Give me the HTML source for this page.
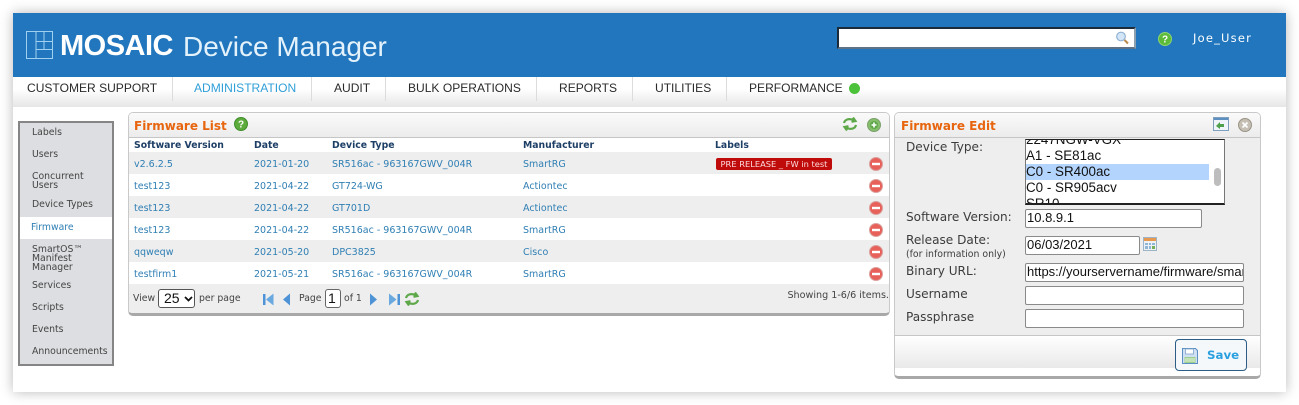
<!DOCTYPE html>
<html lang="en">
<head>
<meta charset="utf-8">
<title>MOSAIC Device Manager</title>
<style>
html,body{margin:0;padding:0;width:1299px;height:405px;overflow:hidden;background:#fff}
body{position:relative;font-family:"DejaVu Sans",Verdana,sans-serif;font-size:9.3px;color:#444}
.a{position:absolute;white-space:nowrap}
#app{position:absolute;left:13px;top:13px;width:1273px;height:379px;background:#fff;box-shadow:0 0 12px rgba(0,0,0,.28)}
#hdr{position:absolute;left:13px;top:13px;width:1273px;height:64px;background:#2176bd}
#nav{position:absolute;left:13px;top:77px;width:1273px;height:30px;background:linear-gradient(#fff 0,#fff 40%,#e6e6e6 100%)}
.nv{position:absolute;top:82px;font:12.05px/13px "Liberation Sans",Arial,sans-serif;color:#2a2a2a;white-space:nowrap}
.sep{position:absolute;top:77px;width:1px;height:24px;background:#dcdcdc}
#side{position:absolute;left:18px;top:121px;width:92px;height:241px;border:2px solid #858585;background:#dddee1}
.si{position:absolute;left:32px;margin-top:1px;color:#444;line-height:9px;white-space:nowrap}
.panel{position:absolute;background:#fff;border:1px solid #c9c9c9;border-bottom:3px solid #a8a8a8;border-radius:5px;box-sizing:border-box;overflow:hidden}
.ttl{position:absolute;margin-top:1px;font-weight:bold;font-size:12px;line-height:14px;color:#e8650f;white-space:nowrap}
.th{position:absolute;top:140px;font-weight:bold;color:#1d3f66;line-height:11px;white-space:nowrap}
.row{position:absolute;left:129px;width:760px;height:22px}
.g{background:#eeeeee}
.td{position:absolute;margin-top:1px;font-size:9.5px;color:#2f7fb4;line-height:11px;white-space:nowrap}
.lab{position:absolute;margin-top:1px;color:#3c3c3c;font-size:12.1px;line-height:13px;white-space:nowrap}
.inp{position:absolute;box-sizing:border-box;background:#fff;border:1px solid #8a8a8a;border-radius:2px;font:13px/16px "Liberation Sans",Arial,sans-serif;color:#111;padding-left:1px;overflow:hidden;white-space:nowrap}
.op{position:absolute;left:0;font:13.4px/16px "Liberation Sans",Arial,sans-serif;color:#111;white-space:nowrap}
svg{position:absolute;overflow:visible}
</style>
</head>
<body>
<div id="app"></div>
<div id="hdr"></div>

<!-- logo -->
<svg style="left:26px;top:31px" width="28" height="29" viewBox="0 0 28 29" fill="none" stroke="#9fd0f0" stroke-width="1">
<path d="M.5.5h26v27H.5zM10 .5v27M18 .5v18M10 10.500h16.500M10 18.500h16.500"/>
</svg>
<div class="a" style="left:60px;top:30px;font:bold 29px/33px 'Liberation Sans',Arial,sans-serif;color:#fff;letter-spacing:-.5px">MOSAIC</div>
<div class="a" style="left:183px;top:30px;font:28px/33px 'Liberation Sans',Arial,sans-serif;color:#e4f2fb">Device Manager</div>

<!-- search -->
<div class="a" style="left:837px;top:27px;width:299px;height:22px;box-sizing:border-box;background:#fff;border:2px solid #1c2b3a;border-bottom-color:#5f7285;border-right-color:#8da0b0;border-left-color:#1c2b3a"></div>
<svg style="left:1115px;top:31px" width="15" height="14" viewBox="0 0 15 14">
<circle cx="6" cy="5.500" r="4.300" fill="#d3e6f7" stroke="#8fb2d3" stroke-width="1.200"/>
<path d="M9.500 9l3.500 3.500" stroke="#b98a4d" stroke-width="2"/>
</svg>
<svg style="left:1158px;top:32px" width="14" height="14" viewBox="0 0 14 14">
<circle cx="7" cy="7" r="6.500" fill="#5dbb3a" stroke="#8fd66f"/>
<text x="7" y="10.500" text-anchor="middle" font-family="Liberation Sans" font-weight="bold" font-size="10" fill="#fff">?</text>
</svg>
<div class="a" style="left:1193px;top:32px;font-size:11.500px;line-height:13px;color:#fff;letter-spacing:1.2px">Joe_User</div>

<!-- nav -->
<div id="nav"></div>
<div class="nv" style="left:27px">CUSTOMER SUPPORT</div>
<div class="sep" style="left:172px"></div>
<div class="nv" style="left:194px;color:#2f9fd8">ADMINISTRATION</div>
<div class="sep" style="left:311px"></div>
<div class="nv" style="left:334px">AUDIT</div>
<div class="sep" style="left:385px"></div>
<div class="nv" style="left:408px">BULK OPERATIONS</div>
<div class="sep" style="left:536px"></div>
<div class="nv" style="left:559px">REPORTS</div>
<div class="sep" style="left:632px"></div>
<div class="nv" style="left:655px">UTILITIES</div>
<div class="sep" style="left:726px"></div>
<div class="nv" style="left:749px">PERFORMANCE</div>
<div class="a" style="left:849px;top:83px;width:11px;height:11px;border-radius:50%;background:#4cc23a"></div>

<!-- sidebar -->
<div id="side"></div>
<div class="a" style="left:20px;top:217px;width:92px;height:22px;background:#fff"></div>
<div class="si" style="top:127px">Labels</div>
<div class="si" style="top:149px">Users</div>
<div class="si" style="top:171px">Concurrent</div>
<div class="si" style="top:180px">Users</div>
<div class="si" style="top:199px">Device Types</div>
<div class="si" style="top:222px;left:31px;color:#2f7fb4">Firmware</div>
<div class="si" style="top:244px">SmartOS™</div>
<div class="si" style="top:253px">Manifest</div>
<div class="si" style="top:262px">Manager</div>
<div class="si" style="top:280px">Services</div>
<div class="si" style="top:302px">Scripts</div>
<div class="si" style="top:324px">Events</div>
<div class="si" style="top:346px">Announcements</div>

<!-- Firmware list panel -->
<div class="panel" style="left:128px;top:112px;width:762px;height:204px">
  <div style="position:absolute;left:0;top:0;width:100%;height:24px;background:linear-gradient(#fafafa,#ececec);border-bottom:1px solid #c6c6c6"></div>
  <div style="position:absolute;left:0;top:39px;width:100%;height:1px;background:#cfcfcf"></div>
  <div style="position:absolute;left:0;top:171px;width:100%;height:30px;background:#eeeeee"></div>
</div>
<div class="ttl" style="left:134px;top:118px">Firmware List</div>
<svg style="left:234px;top:117px" width="14" height="14" viewBox="0 0 14 14">
<circle cx="7" cy="7" r="6.500" fill="#5dab3c" stroke="#3f8d2a"/>
<text x="7" y="10.500" text-anchor="middle" font-family="Liberation Sans" font-weight="bold" font-size="10" fill="#fff">?</text>
</svg>
<svg style="left:842px;top:117px" width="16" height="14" viewBox="0 0 16 14" fill="none" stroke="#5fa84a" stroke-width="2.200">
<path d="M2 6C3 2 8 1 12 3.500M11 .5l2.500 3.500-4 .8M14 8c-1 4-6 5-10 2.500M5 13.500L2.500 10l4-.8"/>
</svg>
<svg style="left:867px;top:118px" width="14" height="14" viewBox="0 0 14 14">
<circle cx="7" cy="7" r="6.500" fill="#86bf6c" stroke="#7a9f6a"/>
<circle cx="7" cy="7" r="4" fill="#5fa84a"/>
<path d="M4.500 7h5M7 4.500v5" stroke="#fff" stroke-width="1.600"/>
</svg>

<div class="th" style="left:134px">Software Version</div>
<div class="th" style="left:254px">Date</div>
<div class="th" style="left:332px">Device Type</div>
<div class="th" style="left:523px">Manufacturer</div>
<div class="th" style="left:715px">Labels</div>

<div class="row g" style="top:152px"></div>
<div class="row g" style="top:196px"></div>
<div class="row g" style="top:240px"></div>

<div class="td" style="left:134px;top:158px">v2.6.2.5</div><div class="td" style="left:254px;top:158px">2021-01-20</div><div class="td" style="left:332px;top:158px">SR516ac - 963167GWV_004R</div><div class="td" style="left:523px;top:158px">SmartRG</div>
<div class="td" style="left:134px;top:180px">test123</div><div class="td" style="left:254px;top:180px">2021-04-22</div><div class="td" style="left:332px;top:180px">GT724-WG</div><div class="td" style="left:523px;top:180px">Actiontec</div>
<div class="td" style="left:134px;top:202px">test123</div><div class="td" style="left:254px;top:202px">2021-04-22</div><div class="td" style="left:332px;top:202px">GT701D</div><div class="td" style="left:523px;top:202px">Actiontec</div>
<div class="td" style="left:134px;top:224px">test123</div><div class="td" style="left:254px;top:224px">2021-04-22</div><div class="td" style="left:332px;top:224px">SR516ac - 963167GWV_004R</div><div class="td" style="left:523px;top:224px">SmartRG</div>
<div class="td" style="left:134px;top:246px">qqweqw</div><div class="td" style="left:254px;top:246px">2021-05-20</div><div class="td" style="left:332px;top:246px">DPC3825</div><div class="td" style="left:523px;top:246px">Cisco</div>
<div class="td" style="left:134px;top:268px">testfirm1</div><div class="td" style="left:254px;top:268px">2021-05-21</div><div class="td" style="left:332px;top:268px">SR516ac - 963167GWV_004R</div><div class="td" style="left:523px;top:268px">SmartRG</div>

<div class="a" style="left:716px;top:158px;width:116px;height:12px;background:#c00b0b;border-radius:2px;color:#fbdcdc;line-height:12px;text-align:center;font-size:8.300px">PRE RELEASE _ FW in test</div>

<svg style="left:869px;top:157px" width="14" height="14" viewBox="0 0 14 14"><circle cx="7" cy="7" r="6.500" fill="#e8605a" stroke="#d9a09c"/><rect x="3" y="5.800" width="8" height="2.400" fill="#fff"/></svg>
<svg style="left:869px;top:179px" width="14" height="14" viewBox="0 0 14 14"><circle cx="7" cy="7" r="6.500" fill="#e8605a" stroke="#d9a09c"/><rect x="3" y="5.800" width="8" height="2.400" fill="#fff"/></svg>
<svg style="left:869px;top:201px" width="14" height="14" viewBox="0 0 14 14"><circle cx="7" cy="7" r="6.500" fill="#e8605a" stroke="#d9a09c"/><rect x="3" y="5.800" width="8" height="2.400" fill="#fff"/></svg>
<svg style="left:869px;top:223px" width="14" height="14" viewBox="0 0 14 14"><circle cx="7" cy="7" r="6.500" fill="#e8605a" stroke="#d9a09c"/><rect x="3" y="5.800" width="8" height="2.400" fill="#fff"/></svg>
<svg style="left:869px;top:245px" width="14" height="14" viewBox="0 0 14 14"><circle cx="7" cy="7" r="6.500" fill="#e8605a" stroke="#d9a09c"/><rect x="3" y="5.800" width="8" height="2.400" fill="#fff"/></svg>
<svg style="left:869px;top:267px" width="14" height="14" viewBox="0 0 14 14"><circle cx="7" cy="7" r="6.500" fill="#e8605a" stroke="#d9a09c"/><rect x="3" y="5.800" width="8" height="2.400" fill="#fff"/></svg>

<!-- pager -->
<div class="a" style="left:133px;top:293px;line-height:11px">View</div>
<div class="a" style="left:158px;top:289px;width:37px;height:19px;box-sizing:border-box;border:1px solid #555;border-radius:3px;background:#fff;font:14px/17px 'Liberation Sans',Arial,sans-serif;color:#111;padding-left:5px">25</div>
<svg style="left:184px;top:296px" width="9" height="6" viewBox="0 0 9 6"><path d="M1 1l3.500 3.500L8 1" fill="none" stroke="#111" stroke-width="1.800"/></svg>
<div class="a" style="left:199px;top:293px;line-height:11px">per page</div>
<svg style="left:262px;top:293px" width="13" height="13" viewBox="0 0 13 13"><path d="M1 1h2.500v11H1z" fill="#4d93d6"/><path d="M11.500 .5v12L4 6.500z" fill="#6aa8e0"/></svg>
<svg style="left:282px;top:293px" width="9" height="13" viewBox="0 0 9 13"><path d="M8 .5v12L1 6.500z" fill="#4d93d6"/></svg>
<div class="a" style="left:299px;top:293px;line-height:11px">Page</div>
<div class="inp" style="left:325px;top:289px;width:16px;height:19px;border-radius:3px;border-color:#666;font-size:14px;line-height:17px;padding-left:2px">1</div>
<div class="a" style="left:344px;top:293px;line-height:11px">of 1</div>
<svg style="left:369px;top:293px" width="9" height="13" viewBox="0 0 9 13"><path d="M1 .5v12L8 6.500z" fill="#4d93d6"/></svg>
<svg style="left:388px;top:293px" width="13" height="13" viewBox="0 0 13 13"><path d="M1 .5v12L8.500 6.500z" fill="#6aa8e0"/><path d="M9.500 1H12v11H9.500z" fill="#4d93d6"/></svg>
<svg style="left:404px;top:292px" width="16" height="14" viewBox="0 0 16 14" fill="none" stroke="#5fa84a" stroke-width="2.200">
<path d="M2 6C3 2 8 1 12 3.500M11 .5l2.500 3.500-4 .8M14 8c-1 4-6 5-10 2.500M5 13.500L2.500 10l4-.8"/>
</svg>
<div class="a" style="right:410px;top:290px;line-height:11px;font-size:9.600px">Showing 1-6/6 items.</div>

<!-- Firmware edit panel -->
<div class="panel" style="left:894px;top:112px;width:367px;height:267px;background:#eeeeee">
  <div style="position:absolute;left:0;top:0;width:100%;height:24px;background:linear-gradient(#fafafa,#ececec);border-bottom:1px solid #c6c6c6"></div>
  <div style="position:absolute;left:0;top:222px;width:100%;height:33px;border-top:1px solid #c6c6c6;box-sizing:border-box;background:linear-gradient(#fff,#e9e9e9)"></div>
  <div style="position:absolute;left:0;top:255px;width:100%;height:10px;background:#fff"></div>
</div>
<div class="ttl" style="left:901px;top:118px">Firmware Edit</div>
<svg style="left:1213px;top:117px" width="16" height="14" viewBox="0 0 16 14">
<rect x=".5" y=".5" width="15" height="13" fill="#eef4fa" stroke="#7f9fbe"/><rect x="1" y="1" width="14" height="2" fill="#5d8fc0"/>
<path d="M3 9l4-4v2h4v3H7v2z" fill="#4fa04a"/>
</svg>
<svg style="left:1238px;top:118px" width="14" height="14" viewBox="0 0 14 14">
<circle cx="7" cy="7" r="6.500" fill="#c4beb3" stroke="#9a9488"/>
<path d="M4.500 4.500l5 5M9.500 4.500l-5 5" stroke="#fff" stroke-width="1.800"/>
</svg>

<div class="lab" style="left:906px;top:140px">Device Type:</div>
<div class="a" style="left:1025px;top:139px;width:200px;height:66px;box-sizing:border-box;background:#fff;border:1px solid #777;border-bottom:2px solid #222;border-top-color:#222;overflow:hidden">
  <div class="op" style="top:-8px">2247NGW-VGX</div>
  <div class="op" style="top:8px">A1 - SE81ac</div>
  <div class="op" style="top:24px;width:183px;height:16px;background:#b3d4fc">C0 - SR400ac</div>
  <div class="op" style="top:40px">C0 - SR905acv</div>
  <div class="op" style="top:56px">SR10</div>
  <div class="a" style="left:188px;top:28px;width:7px;height:18px;border-radius:4px;background:#bdbdbd"></div>
</div>

<div class="lab" style="left:906px;top:210px">Software Version:</div>
<div class="inp" style="left:1025px;top:209px;width:177px;height:19px">10.8.9.1</div>
<div class="lab" style="left:906px;top:233px">Release Date:</div>
<div class="a" style="left:906px;top:249px;font-size:9.350px;line-height:11px;color:#3c3c3c">(for information only)</div>
<div class="inp" style="left:1025px;top:236px;width:115px;height:19px">06/03/2021</div>
<svg style="left:1143px;top:237px" width="14" height="14" viewBox="0 0 14 14">
<rect x=".5" y=".5" width="13" height="13" fill="#eef2f5" stroke="#9db4c8"/><rect x="1" y="1" width="12" height="3" fill="#e79a4f"/>
<path d="M2 6h3v2H2zM6 6h2v2H6zM9 6h3v2H9zM2 9h3v3H2zM6 9h2v3H6z" fill="#8fb6d6"/><path d="M9 9h3v3H9z" fill="#78b05a"/>
</svg>
<div class="lab" style="left:906px;top:264px">Binary URL:</div>
<div class="inp" style="left:1025px;top:263px;width:219px;height:19px">https://yourservername/firmware/smartrg</div>
<div class="lab" style="left:906px;top:287px">Username</div>
<div class="inp" style="left:1025px;top:286px;width:219px;height:19px"></div>
<div class="lab" style="left:906px;top:310px">Passphrase</div>
<div class="inp" style="left:1025px;top:309px;width:219px;height:19px"></div>

<div class="a" style="left:1175px;top:339px;width:72px;height:32px;box-sizing:border-box;border:1px solid #2b5d87;border-radius:4px;background:#f5f8fb"></div>
<svg style="left:1182px;top:348px" width="16" height="16" viewBox="0 0 16 16">
<path d="M.5.500h13l2 2v13H.5z" fill="#cfe0f2" stroke="#5c8fc4"/><rect x="3.500" y="1" width="8" height="5" fill="#fff" stroke="#7fa5cc" stroke-width=".8"/><rect x="2.500" y="9" width="11" height="6" fill="#9ccf8c"/><path d="M3 11h10M3 13h10" stroke="#eaf6e5"/>
</svg>
<div class="a" style="left:1207px;top:348px;font-weight:bold;font-size:11.800px;line-height:14px;color:#2aa0e0">Save</div>
</body>
</html>
